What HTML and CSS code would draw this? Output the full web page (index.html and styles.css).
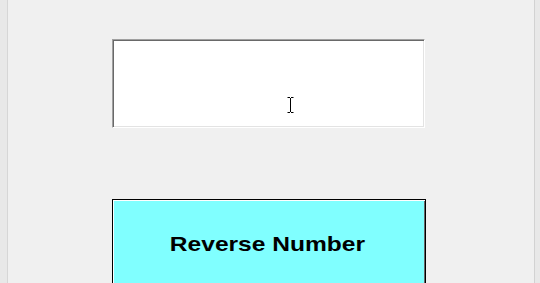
FILE: index.html
```html
<!DOCTYPE html>
<html>
<head>
<meta charset="utf-8">
<link rel="stylesheet" href="styles.css">
</head>
<body>
<div class="window">
  <div class="edge-left"></div>
  <div class="form">
    <div class="textbox">
      <svg class="ibeam" width="7" height="16" viewBox="0 0 7 16">
        <path d="M0.5 0.5h2.5M4 0.5h2.5M3.5 1v14M0.5 15.5h2.5M4 15.5h2.5" stroke="#000" stroke-width="1" fill="none"/>
      </svg>
    </div>
    <button class="btn"><span class="btn-label">Reverse Number</span></button>
  </div>
  <div class="edge-right"></div>
</div>
</body>
</html>
```
FILE: styles.css
```css
html, body {
  margin: 0;
  padding: 0;
  width: 540px;
  height: 283px;
  overflow: hidden;
  background: #f0f0f0;
}
.window {
  display: flex;
  height: 283px;
}
.edge-left {
  width: 7px;
  background: #e8e8e8;
  border-right: 1px solid #d6d6d6;
  flex: none;
}
.form {
  width: 526px;
  flex: none;
  padding: 39px 0 0 104px;
  box-sizing: border-box;
}
.edge-right {
  flex: 1;
  background: #e8e8e8;
  border-left: 1px solid #d2d2d2;
}
.textbox {
  position: relative;
  width: 313px;
  height: 89px;
  box-sizing: border-box;
  background: #fff;
  border-style: solid;
  border-width: 1px;
  border-color: #a0a0a0 #ffffff #ffffff #a0a0a0;
  box-shadow: inset 1px 1px 0 #696969, inset -1px -1px 0 #e3e3e3;
}
.ibeam {
  position: absolute;
  left: 174px;
  top: 57px;
  display: block;
}
.btn {
  display: flex;
  align-items: center;
  justify-content: center;
  margin-top: 71px;
  width: 314px;
  height: 90px;
  box-sizing: border-box;
  padding: 0 3px 1px 0;
  background: #80ffff;
  border: 1px solid #000;
  box-shadow: inset 1px 1px 0 #fff, inset -1px -1px 0 #696969;
  font-family: "Liberation Sans", Arial, sans-serif;
  font-weight: bold;
  font-size: 21px;
  color: #000;
}
.btn-label {
  display: inline-block;
  transform: scaleX(1.17);
  white-space: nowrap;
}
```
